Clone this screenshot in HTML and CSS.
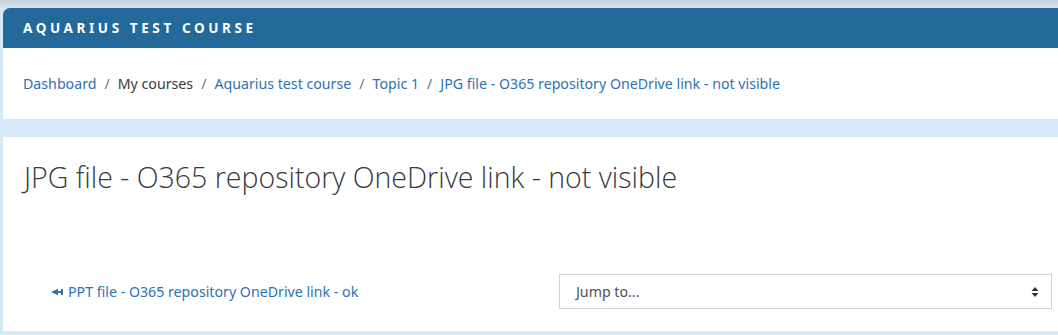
FILE: index.html
```html
<!DOCTYPE html>
<html>
<head>
<meta charset="utf-8">
<link rel="stylesheet" href="styles.css">
</head>
<body>
<div class="page">
  <div class="topstrip"></div>
  <div class="wrap">
    <header class="course-header">AQUARIUS TEST COURSE</header>
    <nav class="crumbs">
      <a href="#">Dashboard</a><span class="sep">/</span>
      <span class="plain">My courses</span><span class="sep">/</span>
      <a href="#">Aquarius test course</a><span class="sep">/</span>
      <a href="#">Topic 1</a><span class="sep">/</span>
      <a href="#">JPG file - O365 repository OneDrive link - not visible</a>
    </nav>
    <div class="gap"></div>
    <main class="content">
      <h1 class="title">JPG file - O365 repository OneDrive link - not visible</h1>
      <div class="activity-nav">
        <div class="prev">
          <a href="#"><svg class="arrow" width="12" height="8" viewBox="0 0 12 8"><path d="M0 4 L7 0.8 L7 7.2 Z" fill="#2d72b1"/><rect x="6" y="3" width="4" height="2" fill="#2d72b1"/><rect x="10" y="1" width="2" height="6" fill="#2d72b1"/></svg>PPT file - O365 repository OneDrive link - ok</a>
        </div>
        <div class="jump">
          <span class="jump-text">Jump to...</span>
          <svg class="carets" width="8" height="12" viewBox="0 0 8 12"><path d="M4 1 L7.5 5 L0.5 5 Z" fill="#333"/><path d="M4 11 L7.5 7 L0.5 7 Z" fill="#333"/></svg>
        </div>
      </div>
    </main>
  </div>
</div>
</body>
</html>
```
FILE: styles.css
```css
html, body {
  margin: 0;
  padding: 0;
}
body {
  background: #d5eaf6;
  font-family: "Noto Sans", "Open Sans", sans-serif;
  width: 1058px;
  height: 335px;
  overflow: hidden;
}
.page {
  display: flex;
  flex-direction: column;
}
.topstrip {
  height: 8px;
  background: linear-gradient(#c4d2dc, #d9e5ee);
}
.wrap {
  padding-left: 3px;
  display: flex;
  flex-direction: column;
}
.course-header {
  background: #23699a;
  color: #ffffff;
  height: 40px;
  border-top-left-radius: 7px;
  display: flex;
  align-items: center;
  padding-left: 20px;
  font-weight: 700;
  font-size: 13.5px;
  letter-spacing: 3.6px;
}
.crumbs {
  background: #ffffff;
  height: 71px;
  display: flex;
  align-items: center;
  padding-left: 20px;
  font-size: 14.2px;
  color: #373a3c;
}
.crumbs a {
  color: #2d72b1;
  text-decoration: none;
}
.crumbs .plain {
  color: #373a3c;
}
.crumbs .sep {
  color: #6a737b;
  margin: 0 8px;
}
.gap {
  height: 18px;
}
.content {
  background: #ffffff;
  height: 194px;
  display: flex;
  flex-direction: column;
}
.title {
  margin: 0;
  padding: 22px 0 0 21px;
  font-family: "Open Sans", "Noto Sans", sans-serif;
  font-weight: 300;
  font-size: 28.5px;
  color: #373a3c;
  line-height: 36px;
}
.activity-nav {
  display: flex;
  align-items: center;
  margin-top: 79px;
  padding-right: 6px;
}
.prev {
  width: 556px;
  display: flex;
  padding-left: 48px;
  box-sizing: border-box;
}
.prev a {
  color: #2d72b1;
  text-decoration: none;
  font-size: 14.2px;
  display: flex;
  align-items: center;
}
.arrow {
  margin-right: 5px;
}
.jump {
  flex: 1;
  height: 35px;
  border: 1px solid #cfd2d4;
  box-sizing: border-box;
  display: flex;
  align-items: center;
  justify-content: space-between;
  padding: 0 12px 0 16px;
  font-size: 14.2px;
  color: #495057;
}
```
